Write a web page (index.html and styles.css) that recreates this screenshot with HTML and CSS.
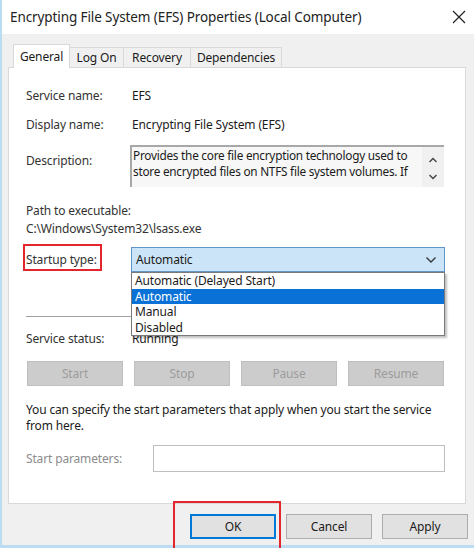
FILE: index.html
```html
<!DOCTYPE html>
<html>
<head>
<meta charset="utf-8">
<link rel="stylesheet" href="styles.css">
</head>
<body>
<div class="window">
  <div class="titlebar">
    <span class="title">Encrypting File System (EFS) Properties (Local Computer)</span>
    <svg class="close" width="14" height="14" viewBox="0 0 14 14"><path d="M1 1L13 13M13 1L1 13" stroke="#222" stroke-width="1.2" fill="none"/></svg>
  </div>
  <div class="body">
    <div class="tabs">
      <div class="tab active">General</div>
      <div class="tab t2">Log On</div>
      <div class="tab t3">Recovery</div>
      <div class="tab t4">Dependencies</div>
    </div>
    <div class="panel">
      <div class="row r1"><span class="label">Service name:</span><span class="value">EFS</span></div>
      <div class="row r2"><span class="label">Display name:</span><span class="value">Encrypting File System (EFS)</span></div>
      <div class="row desc">
        <span class="label dlabel">Description:</span>
        <div class="descbox">
          <div class="desctext">Provides the core file encryption technology used to<br>store encrypted files on NTFS file system volumes. If</div>
          <div class="scroll">
            <svg width="10" height="8" viewBox="0 0 10 8"><path d="M1.5 6L5 2.5L8.5 6" stroke="#444" stroke-width="1.4" fill="none"/></svg>
            <svg width="10" height="8" viewBox="0 0 10 8"><path d="M1.5 2L5 5.5L8.5 2" stroke="#444" stroke-width="1.4" fill="none"/></svg>
          </div>
        </div>
      </div>
      <div class="path">
        <div>Path to executable:</div>
        <div>C:\Windows\System32\lsass.exe</div>
      </div>
      <div class="row startup">
        <span class="label slabel">Startup type:<span class="redbox"></span></span>
        <div class="combo">
          <span>Automatic</span>
          <svg width="12" height="8" viewBox="0 0 12 8"><path d="M1.5 1.5L6 6L10.5 1.5" stroke="#333" stroke-width="1.3" fill="none"/></svg>
          <div class="list">
            <div class="item">Automatic (Delayed Start)</div>
            <div class="item sel">Automatic</div>
            <div class="item">Manual</div>
            <div class="item">Disabled</div>
          </div>
        </div>
      </div>
      <div class="sep"></div>
      <div class="row status"><span class="label">Service status:</span><span class="value">Running</span></div>
      <div class="btns">
        <div class="btn dis">Start</div>
        <div class="btn dis">Stop</div>
        <div class="btn dis">Pause</div>
        <div class="btn dis">Resume</div>
      </div>
      <p class="para">You can specify the start parameters that apply when you start the service from here.</p>
      <div class="row params">
        <span class="label plabel">Start parameters:</span>
        <div class="pbox"></div>
      </div>
    </div>
    <div class="footer">
      <div class="okwrap"><div class="fbtn ok">OK</div><span class="redbox2"></span></div>
      <div class="fbtn">Cancel</div>
      <div class="fbtn">Apply</div>
    </div>
  </div>
</div>
</body>
</html>
```
FILE: styles.css
```css
* { box-sizing: border-box; }
html, body { margin: 0; padding: 0; }
body {
  width: 474px; height: 548px; overflow: hidden;
  font-family: "Noto Sans", "Liberation Sans", sans-serif;
  font-size: 12px; letter-spacing: -0.15px; color: #1b1b1b;
}
.window {
  width: 474px; height: 548px;
  display: flex; flex-direction: column;
  background: #f0f0f0;
  border-left: 2px solid #bcdcf3;
  border-bottom: 3px solid #bcdcf3;
}
.titlebar {
  height: 34px; background: #fff;
  display: flex; align-items: center; justify-content: space-between;
  padding: 0 8px 0 8px;
}
.title { font-size: 13.5px; color: #222; letter-spacing: -0.1px; }
.body { flex: 1; display: flex; flex-direction: column; padding: 10px 0 0 6px; }
.tabs { display: flex; height: 23px; align-items: flex-end; padding-left: 5px; position: relative; z-index: 1; }
.tab {
  height: 20px; margin-right: -1px;
  border: 1px solid #d9d9d9; border-bottom: none;
  background: #f0f0f0;
  display: flex; align-items: center; justify-content: center;
  white-space: nowrap;
}
.tab.active { height: 24px; background: #fff; margin-bottom: -1px; width: 57px; }
.t2 { width: 55px; }
.t3 { width: 68px; }
.t4 { width: 92px; }
.panel {
  width: 458px; height: 437px;
  background: #fff; border: 1px solid #d9d9d9;
  padding: 19px 20px 0 17px;
  display: flex; flex-direction: column;
}
.row { display: flex; align-items: center; }
.label { width: 106px; flex: none; color: #333; }
.value { color: #1b1b1b; }
.r1 { height: 16px; }
.r2 { height: 16px; margin-top: 13px; }
.desc { margin-top: 13px; align-items: flex-start; }
.dlabel { margin-top: 7px; }
.descbox {
  width: 314px; height: 42px; margin-left: -2px;
  border-top: 2px solid #a8a8a8; border-left: 2px solid #a8a8a8;
  background: #f7f7f7;
  display: flex;
}
.desctext { flex: 1; min-width: 0; font-size: 11.8px; letter-spacing: -0.25px; line-height: 15.5px; padding: 1px 0 0 1px; color: #1b1b1b; white-space: nowrap; overflow: hidden; }
.scroll { width: 22px; flex: none; display: flex; flex-direction: column; align-items: center; justify-content: space-around; padding: 4px 0 2px; background: #f0f0f0; }
.path { margin-top: 15px; line-height: 18px; color: #333; }
.startup { margin-top: 9px; height: 25px; }
.slabel { position: relative; }
.redbox {
  position: absolute; left: -3px; top: -7px; width: 79px; height: 27px;
  border: 2px solid #e3262c;
}
.combo {
  position: relative;
  width: 314px; height: 25px; margin-left: -1px;
  background: #cce4f7; border: 1px solid #5f95c9;
  display: flex; align-items: center; justify-content: space-between;
  padding: 0 7px 0 4px;
}
.list {
  position: absolute; left: -1px; top: 24px; width: 314px;
  background: #fff; border: 1px solid #7a7a7a;
  box-shadow: 2px 2px 2px rgba(0,0,0,0.25);
  z-index: 5;
}
.item { height: 15.5px; line-height: 15.5px; padding-left: 3px; }
.item.sel { background: #0a72d6; color: #fff; }
.sep { height: 1px; background: #a0a0a0; margin-top: 44px; width: 419px; }
.status { margin-top: 13px; height: 16px; }
.btns { display: grid; grid-template-columns: repeat(4, 96px); column-gap: 11px; margin-top: 15px; margin-left: 1px; }
.btn {
  height: 25px; display: flex; align-items: center; justify-content: center;
  background: #cccccc; border: 1px solid #bfbfbf; color: #9c9c9c;
}
.para { margin: 16px 0 0; line-height: 16px; width: 425px; color: #1b1b1b; }
.params { margin-top: 11px; }
.plabel { width: 127px; color: #8c8c8c; }
.pbox { width: 293px; height: 27px; border: 1px solid #bfbfbf; background: #fff; }
.footer { display: flex; justify-content: flex-end; gap: 10px; padding: 10px 6px 0 0; }
.okwrap { position: relative; }
.redbox2 {
  position: absolute; left: -17px; top: -13px; width: 108px; height: 52px;
  border: 2px solid #e3262c;
}
.fbtn {
  width: 86px; height: 25px; display: flex; align-items: center; justify-content: center;
  background: #e1e1e1; border: 1px solid #adadad;
}
.fbtn.ok { border: 2px solid #0078d7; }
```
